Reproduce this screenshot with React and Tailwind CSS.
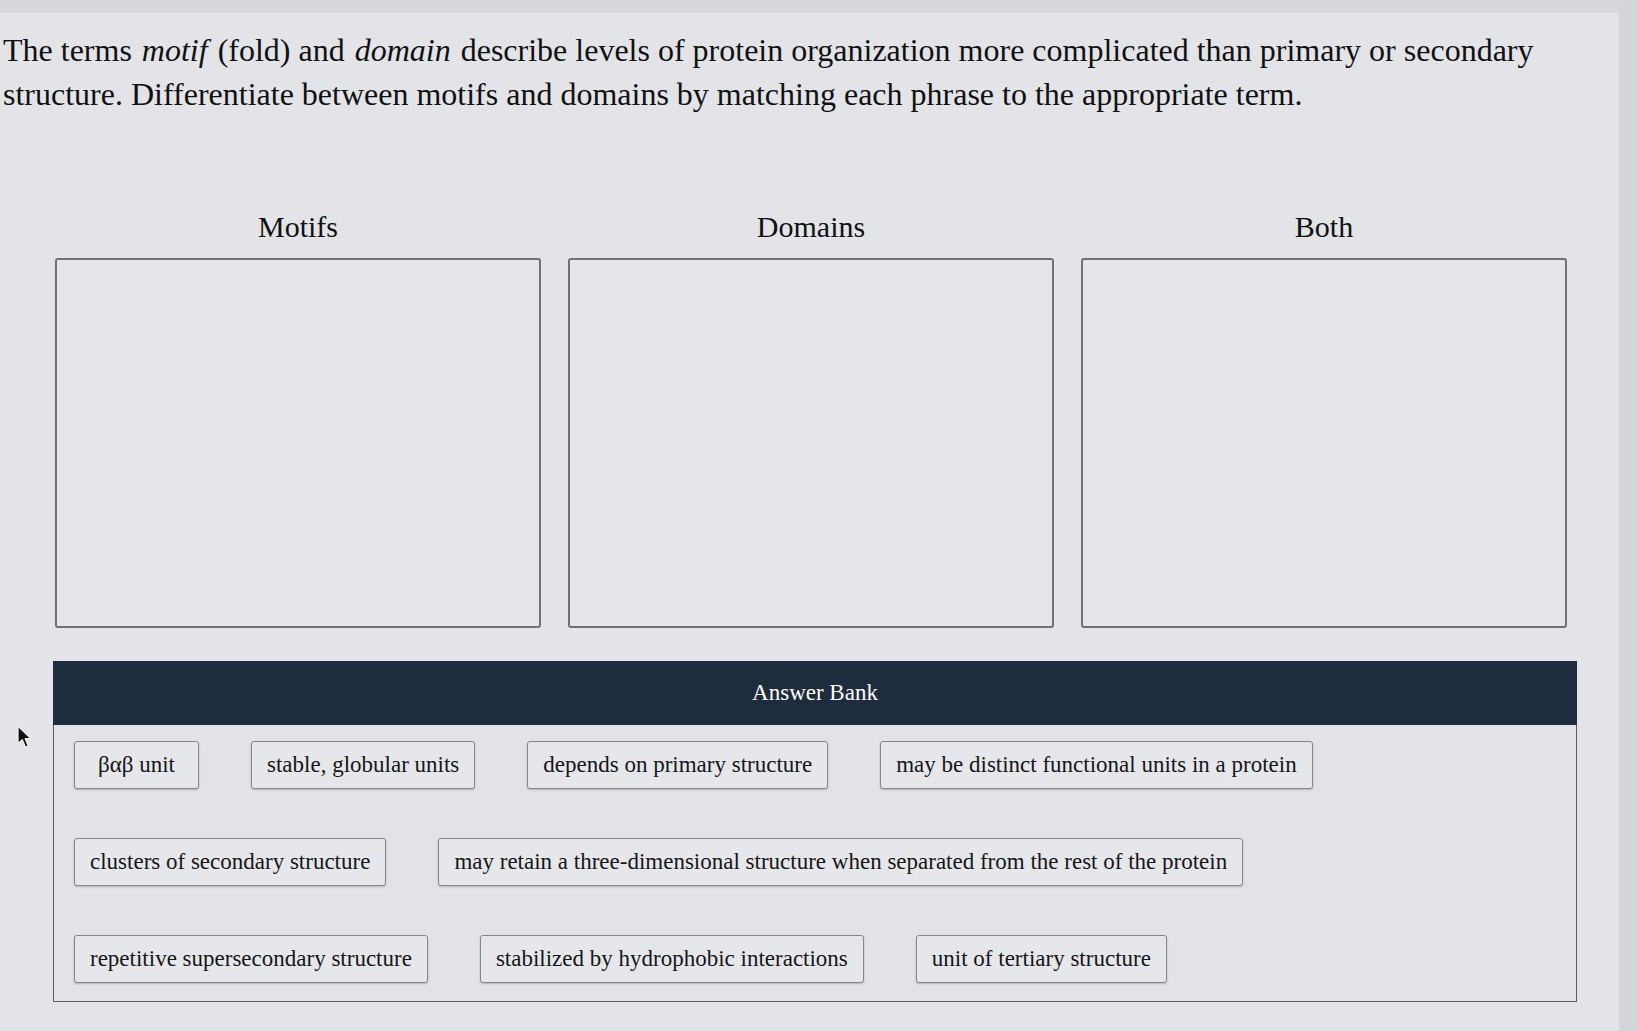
import { useState } from "react";

const bins = ["Motifs", "Domains", "Both"];

const bankRows = [
  ["βαβ unit", "stable, globular units", "depends on primary structure", "may be distinct functional units in a protein"],
  ["clusters of secondary structure", "may retain a three-dimensional structure when separated from the rest of the protein"],
  ["repetitive supersecondary structure", "stabilized by hydrophobic interactions", "unit of tertiary structure"],
];

const Pointer = () => (
  <svg width="17" height="26" viewBox="0 0 16 24" className="absolute left-[17px] top-[725px]">
    <path d="M1 1 L1 17 L5 13.5 L8 20.5 L10.5 19.5 L7.6 12.6 L13 12.6 Z" fill="#111" stroke="#f2f2f2" strokeWidth="1" strokeLinejoin="round" />
  </svg>
);

const Chip = ({ label }) => (
  <div className="min-w-[125px] h-[48px] px-[15px] flex items-center justify-center bg-[#e6e7eb] border border-[#85878d] rounded-[3px] shadow-[0_1px_2px_rgba(0,0,0,0.22)] text-[23px] text-[#161616] whitespace-nowrap cursor-move">
    {label}
  </div>
);

const App = () => {
  const [dropped] = useState({ Motifs: [], Domains: [], Both: [] });

  return (
    <div className="relative w-[1637px] h-[1031px] overflow-hidden flex bg-[#e3e4e8] font-['Liberation_Serif','Times_New_Roman',serif]">
      <div className="flex-1 flex flex-col">
        <div className="h-[13px] bg-[#d7d8dc]" />

        <p className="w-[1590px] pl-[3px] pt-[15px] text-[32px] leading-[44px] text-[#111]">
          The terms <i className="inline-block px-[2px]">motif</i> (fold) and <i className="inline-block px-[2px]">domain</i> describe levels of protein organization more complicated than primary or secondary structure. Differentiate between motifs and domains by matching each phrase to the appropriate term.
        </p>

        <div className="flex gap-[27px] pl-[55px] mt-[94px]">
          {bins.map((name) => (
            <div key={name} className="w-[486px] flex flex-col">
              <div className="text-center text-[30px] leading-[34px] text-[#111] mb-[14px]">{name}</div>
              <div className="h-[370px] border-2 border-[#6f7176] rounded-[3px] bg-[#e4e5e9]">
                {dropped[name].map((item) => (
                  <Chip key={item} label={item} />
                ))}
              </div>
            </div>
          ))}
        </div>

        <div className="ml-[53px] mt-[33px] w-[1524px] flex flex-col">
          <div className="h-[64px] bg-[#1e2c3d] flex items-center justify-center text-white text-[23px]">
            Answer Bank
          </div>
          <div className="h-[277px] border-l border-r border-b border-[#5a5c62] bg-[#e2e3e7] pt-[16px] pl-[20px] flex flex-col gap-[49px]">
            {bankRows.map((row, i) => (
              <div key={i} className="flex gap-[52px]">
                {row.map((item) => (
                  <Chip key={item} label={item} />
                ))}
              </div>
            ))}
          </div>
        </div>
      </div>
      <div className="w-[18px] bg-[#d5d6da]" />
      <Pointer />
    </div>
  );
};

export default App;
